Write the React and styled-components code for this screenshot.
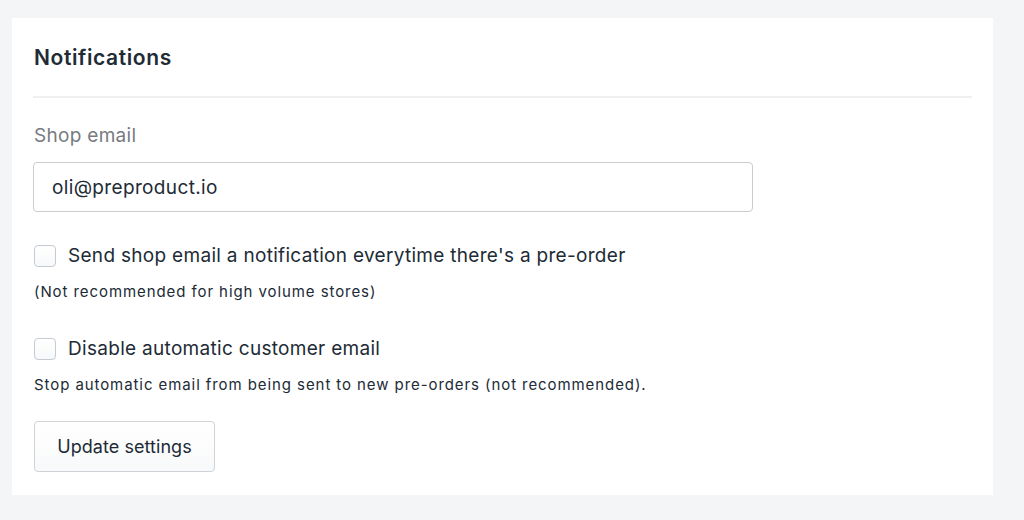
import React from "react";
import styled, { createGlobalStyle } from "styled-components";

const Global = createGlobalStyle`
  html, body { margin: 0; padding: 0; background: #f4f5f7; }
  body { font-family: Inter, "Liberation Sans", Arial, sans-serif; color: #212b36; }
  * { box-sizing: border-box; }
`;

const Page = styled.div`
  padding: 18px 31px 25px 12px;
  height: 520px;
`;

const Card = styled.section`
  background: #fff;
  padding: 0 21px 23px 21px;
  display: flex;
  flex-direction: column;
`;

const Title = styled.h2`
  margin: 0;
  padding: 26px 0 24px 1px;
  font-size: 21px;
  font-weight: 600;
  letter-spacing: 0.6px;
  line-height: 28px;
  color: #212b36;
  border-bottom: 2px solid #eeeff1;
`;

const Label = styled.label`
  display: block;
  margin-top: 26px;
  font-size: 19px;
  letter-spacing: 0.3px;
  line-height: 24px;
  color: #777b80;
  padding-left: 1px;
`;

const Input = styled.input`
  margin-top: 14px;
  width: 720px;
  height: 50px;
  border: 1px solid #c9cdd2;
  border-radius: 4px;
  padding: 0 18px;
  font-family: inherit;
  font-size: 19px;
  letter-spacing: 0.35px;
  color: #212b36;
  outline: none;
`;

const CheckRow = styled.label`
  display: flex;
  align-items: center;
  gap: 12px;
  margin-top: ${(p) => p.$mt}px;
  font-size: 19px;
  letter-spacing: 0.3px;
  line-height: 24px;
  color: #212b36;
  padding-left: 1px;
`;

const Box = styled.span`
  width: 22px;
  height: 22px;
  border: 1px solid #c4cbd3;
  border-radius: 4px;
  background: linear-gradient(#fff, #f7f8f9);
  flex: none;
`;

const Help = styled.p`
  margin: ${(p) => p.$mt}px 0 0 1px;
  font-size: 15px;
  letter-spacing: 0.92px;
  line-height: 20px;
  color: #212b36;
`;

const Button = styled.button`
  align-self: flex-start;
  margin-top: 26px;
  margin-left: 1px;
  width: 181px;
  height: 51px;
  border: 1px solid #cfd3d8;
  border-radius: 4px;
  background: linear-gradient(#fff, #f8f9fa);
  font-family: inherit;
  font-size: 18px;
  letter-spacing: 0.05px;
  color: #212b36;
`;

export default function App() {
  return (
    <>
      <Global />
      <Page>
        <Card>
          <Title>Notifications</Title>
          <Label>Shop email</Label>
          <Input defaultValue="oli@preproduct.io" />
          <CheckRow $mt={32}>
            <Box />
            Send shop email a notification everytime there's a pre-order
          </CheckRow>
          <Help $mt={14}>(Not recommended for high volume stores)</Help>
          <CheckRow $mt={35}>
            <Box />
            Disable automatic customer email
          </CheckRow>
          <Help $mt={14}>Stop automatic email from being sent to new pre-orders (not recommended).</Help>
          <Button>Update settings</Button>
        </Card>
      </Page>
    </>
  );
}
